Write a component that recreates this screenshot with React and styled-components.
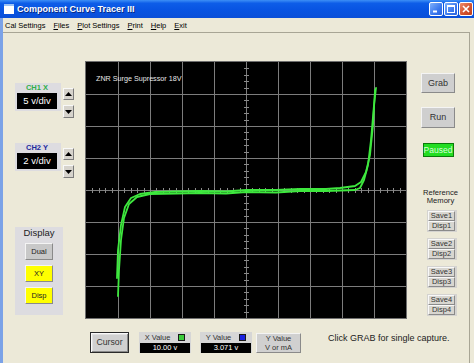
import React from 'react';
import styled, { createGlobalStyle } from 'styled-components';

const GlobalStyle = createGlobalStyle`
  html, body {
    margin: 0;
    padding: 0;
    background: #ece9d8;
  }
  body {
    font-family: "Liberation Sans", Arial, sans-serif;
  }
`

const Window = styled.div`
    width: 474px;
    height: 363px;
    overflow: hidden;
    display: flex;
    flex-direction: column;
    background: #ece9d8;
`

// xp style caption
const TitleBar = styled.div`
    height: 18px;
    flex: none;
    display: flex;
    align-items: center;
    padding: 0 1px 0 4px;
    background: linear-gradient(180deg, #3d8ff6 0%, #0d5de8 18%, #0854e2 55%, #0a4fd8 100%);
`

const AppIcon = styled.div`
    width: 10px;
    height: 8px;
    background: #fff;
    border-top: 2px solid #9cc3f5;
    margin-right: 3px;
`

const Title = styled.span`
    color: #fff;
    font-size: 9px;
    font-weight: bold;
    text-shadow: 1px 1px 0 #0a2a80;
    flex: 1;
`

const CtrlBtn = styled.div`
    width: 14px;
    height: 14px;
    margin-left: 1px;
    box-sizing: border-box;
    border: 1px solid #fff;
    border-radius: 2px;
    display: flex;
    align-items: center;
    justify-content: center;
    background: ${p => p.$close
        ? 'linear-gradient(135deg, #ec8a6a 0%, #d2502c 60%, #c0401c 100%)'
        : 'linear-gradient(135deg, #7fb0fb 0%, #3a78ee 60%, #2a62dc 100%)'};
`

const Frame = styled.div`
    flex: 1;
    display: flex;
    flex-direction: column;
    border-left: 3px solid #7ba2e7;
`

const MenuBar = styled.div`
    height: 14px;
    flex: none;
    display: flex;
    align-items: center;
    gap: 8px;
    padding-left: 2px;
    font-size: 7.5px;
    color: #000;
`

const MenuItem = styled.span`
    white-space: nowrap;
`

const Body = styled.div`
    flex: 1;
    margin-right: 4px;
    border-top: 1px solid #a8a595;
    border-right: 1px solid #a8a595;
    display: flex;
    flex-direction: column;
`

const TopRow = styled.div`
    display: flex;
    flex-direction: row;
    align-items: flex-start;
`

const LeftCol = styled.div`
    width: 82px;
    flex: none;
    box-sizing: border-box;
    padding: 50px 0 0 12px;
    display: flex;
    flex-direction: column;
`

const ChannelGroup = styled.div`
    display: flex;
    flex-direction: row;
    align-items: flex-start;
    gap: 2px;
    margin-top: ${p => p.$top || 0}px;
`

const ChannelPanel = styled.div`
    width: 46px;
    height: 28px;
    background: #dddce0;
    display: flex;
    flex-direction: column;
    align-items: flex-start;
`

const ChannelLabel = styled.div`
    width: 44px;
    height: 10px;
    line-height: 10px;
    text-align: center;
    font-size: 7.5px;
    font-weight: bold;
    color: ${p => p.$color};
`

const Readout = styled.div`
    width: 40px;
    height: 16px;
    margin-left: 2px;
    background: #000;
    color: #fff;
    font-size: 9.5px;
    line-height: 16px;
    text-align: center;
`

const Spinner = styled.div`
    display: flex;
    flex-direction: column;
    gap: 5px;
    margin-top: 5px;
`

const SpinBtn = styled.div`
    width: 11px;
    height: ${p => p.$h}px;
    box-sizing: border-box;
    background: #d6d3cc;
    border: 1px solid;
    border-color: #f8f8f8 #7a7a7a #7a7a7a #f8f8f8;
    display: flex;
    align-items: center;
    justify-content: center;
`

const DisplayGroup = styled.div`
    width: 48px;
    height: 88px;
    margin-top: 49px;
    background: #dddce0;
    display: flex;
    flex-direction: column;
    align-items: center;
`

const GroupTitle = styled.div`
    font-size: 9.5px;
    line-height: 12px;
    color: #222;
    margin-bottom: 4px;
`

const ModeBtn = styled.div`
    width: 28px;
    height: 17px;
    box-sizing: border-box;
    margin-bottom: 5px;
    background: ${p => p.$on ? '#ffff00' : '#c8c8c8'};
    border: 1px solid;
    border-color: #f4f4f4 #8a8a8a #8a8a8a #f4f4f4;
    font-size: 7.5px;
    line-height: 15px;
    text-align: center;
    color: #222;
`

const Scope = styled.div`
    width: 320px;
    height: 256px;
    flex: none;
    margin-top: 28px;
    background: #000;
    border: 1px solid #6e6e6e;
    position: relative;
`

const ScopeLabel = styled.div`
    position: absolute;
    left: 10px;
    top: 12px;
    color: #e8e8e8;
    font-size: 7.2px;
    line-height: 9px;
    white-space: nowrap;
`

const RightCol = styled.div`
    width: 62px;
    flex: none;
    padding-top: 40px;
    display: flex;
    flex-direction: column;
    align-items: center;
`

const PanelBtn = styled.div`
    width: 34px;
    height: ${p => p.$h || 20}px;
    box-sizing: border-box;
    margin-bottom: 14px;
    background: #cfcfcf;
    border: 1px solid;
    border-color: #f4f4f4 #8a8a8a #8a8a8a #f4f4f4;
    font-size: 9px;
    line-height: ${p => (p.$h || 20) - 2}px;
    text-align: center;
    color: #333;
`

const StatusLamp = styled.div`
    width: 31px;
    height: 14px;
    box-sizing: border-box;
    margin-top: 1px;
    background: #22dd22;
    border: 1px solid #0a7a0a;
    font-size: 8.5px;
    line-height: 12px;
    text-align: center;
    color: #d8ffd8;
`

const MemoryTitle = styled.div`
    margin-top: 32px;
    font-size: 7.6px;
    line-height: 8px;
    text-align: center;
    color: #222;
    padding-left: 5px;
`

const MemoryStack = styled.div`
    margin-top: 5px;
    padding-left: 7px;
    display: flex;
    flex-direction: column;
    gap: 6px;
`

const MemoryPair = styled.div`
    width: 30px;
    height: 22px;
    background: #d4d3d0;
    display: flex;
    flex-direction: column;
    align-items: center;
    justify-content: center;
`

const MemBtn = styled.div`
    width: 27px;
    height: 10px;
    box-sizing: border-box;
    background: #d8d6d0;
    border: 1px solid;
    border-color: #f8f8f8 #8a8a8a #8a8a8a #f8f8f8;
    font-size: 7.5px;
    line-height: 8px;
    text-align: center;
    color: #333;
`

const BottomBar = styled.div`
    display: flex;
    flex-direction: row;
    align-items: flex-start;
    padding: 13px 0 0 87px;
`

const CursorBtn = styled.div`
    width: 39px;
    height: 21px;
    box-sizing: border-box;
    background: #d0d0d0;
    border: 1px solid #2a2a2a;
    box-shadow: inset 1px 1px 0 #fafafa, inset -1px -1px 0 #8a8a8a, inset 2px 2px 0 #e0e0e0;
    font-size: 8.7px;
    line-height: 19px;
    text-align: center;
    color: #333;
`

const ValueGroup = styled.div`
    width: 52px;
    height: 21px;
    margin-left: ${p => p.$gap}px;
    background: #d6d6d6;
    display: flex;
    flex-direction: column;
    align-items: center;
`

const ValueHead = styled.div`
    height: 11px;
    display: flex;
    align-items: center;
    gap: 8px;
    font-size: 7.5px;
    color: #333;
`

const Swatch = styled.span`
    width: 5px;
    height: 5px;
    background: ${p => p.$color};
    border: 1px solid #1a1a1a;
`

const ValueBox = styled.div`
    width: 50px;
    height: 10px;
    background: #000;
    color: #fff;
    font-size: 7.5px;
    line-height: 10px;
    text-align: center;
`

const UnitBtn = styled.div`
    width: 45px;
    height: 20px;
    box-sizing: border-box;
    margin: 1px 0 0 4px;
    background: #d0d0d0;
    border: 1px solid;
    border-color: #f4f4f4 #8a8a8a #8a8a8a #f4f4f4;
    font-size: 7.5px;
    line-height: 8.5px;
    padding-top: 1px;
    text-align: center;
    color: #333;
`

const Hint = styled.div`
    margin-left: 27px;
    font-size: 9px;
    line-height: 12px;
    color: #222;
    white-space: nowrap;
`

const U = styled.span`
    text-decoration: underline;
`

const Arrow = ({ up }) => (
    <svg width="7" height="4" viewBox="0 0 7 4">
        <polygon points={up ? '3.5,0 7,4 0,4' : '0,0 7,0 3.5,4'} fill="#000" />
    </svg>
)

const upper = [[31,216],[32,188],[35,163],[39,145],[45,136],[54,132],[69,130],[90,129.5],[114,129],[140,129.5],[160,128],[190,128],[214,127],[240,127],[254,126],[269,124],[275,120],[280,110],[284,93],[287,63],[289,28]]
const lower = [[32,234],[33,208],[35,178],[38,156],[43,142],[51,135],[64,132],[90,131.5],[114,131],[140,131.5],[160,130],[190,130.5],[214,129],[240,129],[269,128],[274,126],[278,118],[282,103],[285,78],[288,43],[290,26]]

const pts = a => a.map(p => p.join(',')).join(' ')

const ScopeGrid = () => {
    const lines = []
    for (let i = 1; i < 10; i++) {
        lines.push(<line key={'v' + i} x1={i * 32 + 0.5} y1="0" x2={i * 32 + 0.5} y2="256" />)
    }
    for (let j = 1; j < 8; j++) {
        lines.push(<line key={'h' + j} x1="0" y1={j * 32 + 0.5} x2="320" y2={j * 32 + 0.5} />)
    }
    const ticks = []
    for (let k = 1; k < 50; k++) {
        const x = Math.round(k * 6.4) + 0.5
        ticks.push(<line key={'tx' + k} x1={x} y1="126" x2={x} y2="131" />)
    }
    for (let k = 1; k < 40; k++) {
        const y = Math.round(k * 6.4) + 0.5
        ticks.push(<line key={'ty' + k} x1="158" y1={y} x2="163" y2={y} />)
    }
    return (
        <svg width="320" height="256" viewBox="0 0 320 256" style={{ display: 'block' }}>
            <g stroke="#7c7c7c" strokeWidth="1">{lines}</g>
            <g stroke="#8a8a8a" strokeWidth="1">{ticks}</g>
            <g fill="none" strokeLinejoin="round" strokeLinecap="round">
                <polyline points={pts(upper)} stroke="#3ee83e" strokeWidth="1.8" />
                <polyline points={pts(lower)} stroke="#3ee83e" strokeWidth="1.8" />
            </g>
        </svg>
    )
}

const Channel = ({ label, color, value, top }) => (
    <ChannelGroup $top={top}>
        <ChannelPanel>
            <ChannelLabel $color={color}>{label}</ChannelLabel>
            <Readout>{value}</Readout>
        </ChannelPanel>
        <Spinner>
            <SpinBtn $h={12}><Arrow up /></SpinBtn>
            <SpinBtn $h={13}><Arrow /></SpinBtn>
        </Spinner>
    </ChannelGroup>
)

const App = () => {
    return (
        <Window>
            <GlobalStyle />
            <TitleBar>
                <AppIcon />
                <Title>Component Curve Tracer III</Title>
                <CtrlBtn>
                    <svg width="10" height="10" viewBox="0 0 10 10"><rect x="2" y="6.5" width="4" height="2" fill="#fff" /></svg>
                </CtrlBtn>
                <CtrlBtn>
                    <svg width="10" height="10" viewBox="0 0 10 10"><rect x="1.5" y="1.5" width="7" height="7" fill="none" stroke="#fff" /><rect x="1.5" y="1.5" width="7" height="1.5" fill="#fff" /></svg>
                </CtrlBtn>
                <CtrlBtn $close>
                    <svg width="10" height="10" viewBox="0 0 10 10"><path d="M2 2 L8 8 M8 2 L2 8" stroke="#fff" strokeWidth="1.6" /></svg>
                </CtrlBtn>
            </TitleBar>
            <Frame>
                <MenuBar>
                    <MenuItem>Cal Settings</MenuItem>
                    <MenuItem><U>F</U>iles</MenuItem>
                    <MenuItem><U>P</U>lot Settings</MenuItem>
                    <MenuItem><U>P</U>rint</MenuItem>
                    <MenuItem><U>H</U>elp</MenuItem>
                    <MenuItem><U>E</U>xit</MenuItem>
                </MenuBar>
                <Body>
                    <TopRow>
                        <LeftCol>
                            <Channel label="CH1 X" color="#2fae4a" value="5 v/div" />
                            <Channel label="CH2 Y" color="#1c2a9c" value="2 v/div" top={25} />
                            <DisplayGroup>
                                <GroupTitle>Display</GroupTitle>
                                <ModeBtn>Dual</ModeBtn>
                                <ModeBtn $on>XY</ModeBtn>
                                <ModeBtn $on>Disp</ModeBtn>
                            </DisplayGroup>
                        </LeftCol>
                        <Scope>
                            <ScopeGrid />
                            <ScopeLabel>ZNR Surge Supressor 18V</ScopeLabel>
                        </Scope>
                        <RightCol>
                            <PanelBtn>Grab</PanelBtn>
                            <PanelBtn $h={21}>Run</PanelBtn>
                            <StatusLamp>Paused</StatusLamp>
                            <MemoryTitle>Reference<br />Memory</MemoryTitle>
                            <MemoryStack>
                                {[1, 2, 3, 4].map(n => (
                                    <MemoryPair key={n}>
                                        <MemBtn>Save{n}</MemBtn>
                                        <MemBtn>Disp{n}</MemBtn>
                                    </MemoryPair>
                                ))}
                            </MemoryStack>
                        </RightCol>
                    </TopRow>
                    <BottomBar>
                        <CursorBtn>Cursor</CursorBtn>
                        <ValueGroup $gap={10}>
                            <ValueHead>X Value <Swatch $color="#3ccc3c" /></ValueHead>
                            <ValueBox>10.00 v</ValueBox>
                        </ValueGroup>
                        <ValueGroup $gap={9}>
                            <ValueHead>Y Value <Swatch $color="#1a22e0" /></ValueHead>
                            <ValueBox>3.071 v</ValueBox>
                        </ValueGroup>
                        <UnitBtn>Y Value<br />V or mA</UnitBtn>
                        <Hint>Click GRAB for single capture.</Hint>
                    </BottomBar>
                </Body>
            </Frame>
        </Window>
    );
}

export default App;
